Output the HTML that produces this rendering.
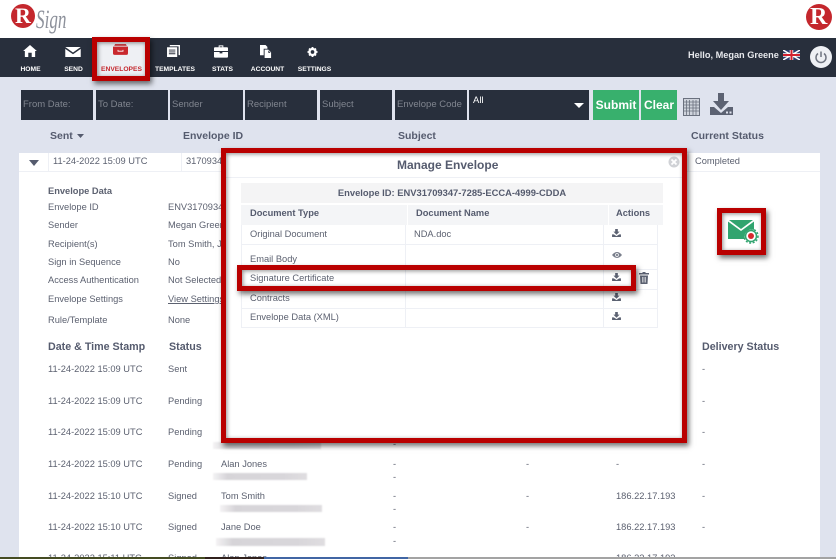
<!DOCTYPE html>
<html><head><meta charset="utf-8"><style>
html,body{margin:0;padding:0;width:836px;height:559px;overflow:hidden;background:#dfe3ee;}
body{position:relative;font-family:"Liberation Sans",sans-serif;font-size:9.3px;color:#5c6170;}
div,span,svg{position:absolute;white-space:nowrap;}
.t{line-height:12px;}
.nl{color:#fff;font-size:6.7px;font-weight:bold;top:65px;line-height:9px;transform:translateX(-50%);}
.f{top:90px;height:30px;background:#282f3c;color:#80858f;font-size:9.5px;line-height:30px;padding-left:2px;box-sizing:border-box;}
.h{font-weight:bold;font-size:10.5px;color:#555b6e;line-height:14px;}
.l{background:#eef0f5;}
.r{border:5px solid #b90000;box-sizing:border-box;box-shadow:2px 3px 5px rgba(0,0,0,.55),inset 1px 1px 4px rgba(0,0,0,.45);}
.b{height:7px;background:linear-gradient(90deg,#f4f3f4,#d6d4d8 15%,#d8d6da 75%,#dfdde0);filter:blur(.7px);}
.mh{font:bold 9.3px/13px "Liberation Sans",sans-serif;color:#555b6e;}
</style></head><body>
<!-- top header -->
<div style="left:0;top:0;width:836px;height:38px;background:#fff"></div>
<svg style="left:11px;top:4px" width="24" height="24"><circle cx="12" cy="12" r="12" fill="#c4272d"/></svg>
<span style="left:15px;top:4px;font:bold 22px/24px 'Liberation Serif',serif;color:#fff">R</span>
<span style="left:36px;top:7px;font:italic 26px/26px 'Liberation Serif',serif;color:#8d919b;transform:scaleX(.66);transform-origin:left top">Sign</span>
<svg style="left:805px;top:3px" width="28" height="28"><circle cx="14" cy="14" r="13" fill="#c4272d"/></svg>
<span style="left:810px;top:5px;font:bold 24px/24px 'Liberation Serif',serif;color:#fff">R</span>
<!-- nav -->
<div style="left:0;top:38px;width:836px;height:39px;background:#282f3c"></div>
<svg style="left:23px;top:45px" width="14" height="12" viewBox="0 0 16 14"><path fill="#fff" d="M8 0 16 7H14V14H10V9H6V14H2V7H0Z"/></svg>
<svg style="left:65px;top:47px" width="16" height="10" viewBox="0 0 17 11"><path fill="#fff" d="M0 0H17L8.500 6ZM0 2 8.500 8 17 2V11H0Z"/></svg>
<svg style="left:167px;top:45px" width="13" height="12" viewBox="0 0 14 13"><path fill="#fff" d="M3 0H14V11H12.500V1.500H3ZM0 2.500H11V13H0Z"/><path stroke="#282f3c" d="M2 5.500H9M2 7.500H9M2 9.500H9"/></svg>
<svg style="left:214px;top:45px" width="14" height="13" viewBox="0 0 15 13"><path fill="#fff" d="M5 0H10V2H14Q15 2 15 3V6H0V3Q0 2 1 2H5ZM6 1V2H9V1ZM0 7H6V8.500H9V7H15V12Q15 13 14 13H1Q0 13 0 12Z"/></svg>
<svg style="left:260px;top:45px" width="12" height="13" viewBox="0 0 13 14"><path fill="#fff" d="M0 0H6L8 2V4H4V11H0ZM5 5H9L12 8V14H5ZM9 5.800V8.500H11.500Z"/></svg>
<svg style="left:307px;top:47px" width="11" height="10" viewBox="0 0 11 11"><circle cx="5.500" cy="5.500" r="3.300" fill="none" stroke="#fff" stroke-width="2.600"/><path stroke="#fff" stroke-width="2" d="M5.500 0V2M5.500 9V11M0 5.500H2M9 5.500H11M1.700 1.700 3 3M8 8 9.300 9.300M9.300 1.700 8 3M3 8 1.700 9.300"/></svg>
<span class="nl" style="left:30.500px">HOME</span>
<span class="nl" style="left:73.500px">SEND</span>
<span class="nl" style="left:175px">TEMPLATES</span>
<span class="nl" style="left:222.500px">STATS</span>
<span class="nl" style="left:267.500px">ACCOUNT</span>
<span class="nl" style="left:314.500px">SETTINGS</span>
<!-- envelopes highlight -->
<div style="left:92px;top:37px;width:58px;height:44px;background:#eef0f4"></div>
<svg style="left:113px;top:43px" width="15" height="13" viewBox="0 0 18 13"><path fill="#c9282d" d="M2.500 0H15.500L16.500 2H1.500ZM0 3H18V11Q18 13 16 13H2Q0 13 0 11Z"/><path stroke="#fff" fill="none" d="M6 7V8.500H12V7"/></svg>
<span class="nl" style="left:121.500px;color:#c4272d">ENVELOPES</span>
<div class="r" style="left:92px;top:37px;width:58px;height:44px"></div>
<span class="t" style="left:688px;top:49px;color:#e6e8ec;font-size:9.2px;font-weight:bold">Hello, Megan Greene</span>
<svg style="left:783px;top:50px" width="17" height="10" viewBox="0 0 17 10"><rect width="17" height="10" fill="#2b3a6b"/><path stroke="#fff" stroke-width="1.500" d="M0 0 17 10M17 0 0 10"/><path stroke="#fff" stroke-width="3.500" d="M8.500 0V10M0 5H17"/><path stroke="#d2202f" stroke-width="2" d="M8.500 0V10M0 5H17"/></svg>
<svg style="left:810px;top:46px" width="22" height="22" viewBox="0 0 22 22"><circle cx="11" cy="11" r="11" fill="#eef0f4"/><path fill="none" stroke="#6f7480" stroke-width="1.500" d="M8 7.500A5 5 0 1 0 14 7.500M11 5.500V11"/></svg>
<!-- filters -->
<div class="f" style="left:21px;width:72px">From Date:</div>
<div class="f" style="left:96px;width:72px">To Date:</div>
<div class="f" style="left:170px;width:73px">Sender</div>
<div class="f" style="left:245px;width:72px">Recipient</div>
<div class="f" style="left:320px;width:72px">Subject</div>
<div class="f" style="left:395px;width:72px">Envelope Code</div>
<div class="f" style="left:469px;width:120px;color:#fff;line-height:12px;padding:5px 0 0 4px;font-size:9.500px">All</div>
<svg style="left:574px;top:103px" width="10" height="5"><path fill="#fff" d="M0 0H10L5 5Z"/></svg>
<div style="left:593px;top:90px;width:46px;height:30px;background:#38b06d;color:#fff;font:bold 12px/30px 'Liberation Sans',sans-serif;text-align:center">Submit</div>
<div style="left:641px;top:90px;width:36px;height:30px;background:#38b06d;color:#fff;font:bold 12px/30px 'Liberation Sans',sans-serif;text-align:center">Clear</div>
<svg style="left:683px;top:98px" width="17" height="18" viewBox="0 0 17 18"><rect x=".5" y=".5" width="16" height="17" fill="#cfd3dc" stroke="#6a707e"/><path stroke="#6a707e" stroke-width=".8" d="M0 4H17M0 7H17M0 10H17M0 13H17M3.500 2V18M6.500 2V18M10 2V18M13 2V18"/></svg>
<svg style="left:710px;top:93px" width="24" height="23" viewBox="0 0 24 23"><path fill="#5c6272" d="M8 0H14V8H19L11 17 3 8H8Z"/><path fill="#5c6272" d="M0 14H4L11 20 18 14H23V22H0Z"/><path fill="#dfe3ee" d="M16 18.500H18V20.500H16ZM19.500 18.500H21.500V20.500H19.500Z"/></svg>
<!-- table head -->
<span class="h" style="left:50px;top:129px">Sent</span>
<svg style="left:77px;top:134px" width="7" height="4"><path fill="#555b6e" d="M0 0H7L3.500 4Z"/></svg>
<span class="h" style="left:183px;top:129px">Envelope ID</span>
<span class="h" style="left:398px;top:129px">Subject</span>
<span class="h" style="left:691px;top:129px">Current Status</span>
<!-- content panel -->
<div style="left:19px;top:153px;width:801px;height:404px;background:#fff"></div>
<div class="l" style="left:19px;top:171px;width:801px;height:1px"></div>
<div class="l" style="left:48px;top:153px;width:1px;height:18px"></div>
<div class="l" style="left:181px;top:153px;width:1px;height:18px"></div>
<div class="l" style="left:688px;top:153px;width:1px;height:18px"></div>
<svg style="left:29px;top:160px" width="10" height="6"><path fill="#555b6e" d="M0 0H10L5 6Z"/></svg>
<span class="t" style="left:53px;top:155px">11-24-2022 15:09 UTC</span>
<span class="t" style="left:186px;top:155px">31709347</span>
<span class="t" style="left:695px;top:155px">Completed</span>
<!-- envelope data -->
<span class="t" style="left:48px;top:185px;font-weight:bold">Envelope Data</span>
<span class="t" style="left:48px;top:201px">Envelope ID</span><span class="t" style="left:168px;top:201px">ENV31709347</span>
<span class="t" style="left:48px;top:219px">Sender</span><span class="t" style="left:168px;top:219px">Megan Greene</span>
<span class="t" style="left:48px;top:238px">Recipient(s)</span><span class="t" style="left:168px;top:238px">Tom Smith, Jane</span>
<span class="t" style="left:48px;top:256px">Sign in Sequence</span><span class="t" style="left:168px;top:256px">No</span>
<span class="t" style="left:48px;top:274px">Access Authentication</span><span class="t" style="left:168px;top:274px">Not Selected</span>
<span class="t" style="left:48px;top:293px">Envelope Settings</span><span class="t" style="left:168px;top:293px;text-decoration:underline">View Settings</span>
<span class="t" style="left:48px;top:314px">Rule/Template</span><span class="t" style="left:168px;top:314px">None</span>
<!-- history -->
<span class="h" style="left:48px;top:340px;font-size:10.700px">Date &amp; Time Stamp</span>
<span class="h" style="left:169px;top:340px;font-size:10.700px">Status</span>
<span class="h" style="left:702px;top:340px;font-size:10.700px">Delivery Status</span>
<span class="t" style="left:48px;top:363px">11-24-2022 15:09 UTC</span><span class="t" style="left:168px;top:363px">Sent</span>
<span class="t" style="left:48px;top:395px">11-24-2022 15:09 UTC</span><span class="t" style="left:168px;top:395px">Pending</span>
<span class="t" style="left:48px;top:426px">11-24-2022 15:09 UTC</span><span class="t" style="left:168px;top:426px">Pending</span>
<span class="t" style="left:48px;top:458px">11-24-2022 15:09 UTC</span><span class="t" style="left:168px;top:458px">Pending</span><span class="t" style="left:221px;top:458px">Alan Jones</span>
<span class="t" style="left:48px;top:490px">11-24-2022 15:10 UTC</span><span class="t" style="left:168px;top:490px">Signed</span><span class="t" style="left:221px;top:490px">Tom Smith</span>
<span class="t" style="left:48px;top:521px">11-24-2022 15:10 UTC</span><span class="t" style="left:168px;top:521px">Signed</span><span class="t" style="left:221px;top:521px">Jane Doe</span>
<span class="t" style="left:48px;top:552px;height:5px;overflow:hidden">11-24-2022 15:11 UTC</span><span class="t" style="left:168px;top:552px;height:5px;overflow:hidden">Signed</span><span class="t" style="left:221px;top:552px;height:5px;overflow:hidden">Alan Jones</span>
<div class="b" style="left:213px;top:442px;width:108px"></div>
<div class="b" style="left:213px;top:473px;width:94px"></div>
<div class="b" style="left:220px;top:505px;width:102px"></div>
<div class="b" style="left:216px;top:538px;width:109px;height:8px"></div>
<span class="t" style="left:702px;top:363px">-</span><span class="t" style="left:702px;top:395px">-</span><span class="t" style="left:702px;top:426px">-</span><span class="t" style="left:702px;top:458px">-</span><span class="t" style="left:702px;top:490px">-</span><span class="t" style="left:702px;top:521px">-</span>
<span class="t" style="left:393px;top:438px">-</span><span class="t" style="left:393px;top:458px">-</span><span class="t" style="left:393px;top:471px">-</span><span class="t" style="left:393px;top:490px">-</span><span class="t" style="left:393px;top:503px">-</span><span class="t" style="left:393px;top:521px">-</span><span class="t" style="left:393px;top:535px">-</span>
<span class="t" style="left:526px;top:458px">-</span><span class="t" style="left:526px;top:490px">-</span><span class="t" style="left:526px;top:521px">-</span>
<span class="t" style="left:616px;top:458px">-</span>
<span class="t" style="left:616px;top:490px">186.22.17.193</span><span class="t" style="left:616px;top:521px">186.22.17.193</span>
<span class="t" style="left:616px;top:552px;height:5px;overflow:hidden">186.22.17.193</span>
<!-- bottom strip -->
<div style="left:0;top:557px;width:836px;height:2px;background:#a3a3a3"></div>
<div style="left:0;top:557px;width:205px;height:2px;background:#454c22"></div>
<div style="left:205px;top:557px;width:59px;height:2px;background:#30201c"></div>
<div style="left:264px;top:557px;width:144px;height:2px;background:#4166a4"></div>
<!-- modal -->
<div style="left:226px;top:153px;width:456px;height:285px;background:#fff"></div>
<div class="l" style="left:226px;top:177px;width:456px;height:1px"></div>
<span style="left:397px;top:158px;font:bold 12px/14px 'Liberation Sans',sans-serif;color:#555b6e">Manage Envelope</span>
<svg style="left:668px;top:156px" width="12" height="12" viewBox="0 0 12 12"><circle cx="6" cy="6" r="5.500" fill="#d0d2d6"/><path stroke="#fff" stroke-width="1.800" d="M3.500 3.500 8.500 8.500M8.500 3.500 3.500 8.500"/></svg>
<div style="left:241px;top:183px;width:422px;height:20px;background:#f4f4f5"></div>
<span style="left:241px;width:422px;text-align:center;top:186px;font:bold 9.400px/13px 'Liberation Sans',sans-serif;color:#555b6e">Envelope ID: ENV31709347-7285-ECCA-4999-CDDA</span>
<div style="left:241px;top:205px;width:422px;height:20px;background:#f4f5f7"></div>
<div style="left:407px;top:205px;width:1px;height:20px;background:#fff"></div>
<div style="left:608px;top:205px;width:1px;height:20px;background:#fff"></div>
<span class="mh" style="left:250px;top:207px">Document Type</span>
<span class="mh" style="left:416px;top:207px">Document Name</span>
<span class="mh" style="left:616px;top:207px">Actions</span>
<!-- modal grid -->
<div class="l" style="left:241px;top:244px;width:417px;height:1px"></div>
<div class="l" style="left:241px;top:269px;width:417px;height:1px"></div>
<div class="l" style="left:241px;top:289px;width:417px;height:1px"></div>
<div class="l" style="left:241px;top:308px;width:417px;height:1px"></div>
<div class="l" style="left:241px;top:327px;width:417px;height:1px"></div>
<div class="l" style="left:241px;top:225px;width:1px;height:103px"></div>
<div class="l" style="left:405px;top:225px;width:1px;height:103px"></div>
<div class="l" style="left:603px;top:225px;width:1px;height:103px"></div>
<div class="l" style="left:657px;top:225px;width:1px;height:103px"></div>
<span class="t" style="left:250px;top:228px">Original Document</span><span class="t" style="left:414px;top:228px">NDA.doc</span>
<span class="t" style="left:250px;top:253px">Email Body</span>
<span class="t" style="left:250px;top:272px">Signature Certificate</span>
<span class="t" style="left:250px;top:292px">Contracts</span>
<span class="t" style="left:250px;top:311px">Envelope Data (XML)</span>
<svg style="left:612px;top:229px" width="9" height="8" viewBox="0 0 10 9"><path fill="#5c6272" d="M3.500 0H6.500V3H8.500L5 6.500 1.500 3H3.500ZM0 6H2L5 8 8 6H10V9H0Z"/></svg>
<svg style="left:612px;top:251px" width="10" height="8" viewBox="0 0 11 8"><path fill="#7a7f8c" d="M0 4Q5.500-2.500 11 4 5.500 10.500 0 4Z"/><circle cx="5.500" cy="4" r="2" fill="#fff"/><circle cx="5.500" cy="4" r="1.200" fill="#7a7f8c"/></svg>
<svg style="left:612px;top:273px" width="9" height="8" viewBox="0 0 10 9"><path fill="#5c6272" d="M3.500 0H6.500V3H8.500L5 6.500 1.500 3H3.500ZM0 6H2L5 8 8 6H10V9H0Z"/></svg>
<svg style="left:612px;top:293px" width="9" height="8" viewBox="0 0 10 9"><path fill="#5c6272" d="M3.500 0H6.500V3H8.500L5 6.500 1.500 3H3.500ZM0 6H2L5 8 8 6H10V9H0Z"/></svg>
<svg style="left:612px;top:312px" width="9" height="8" viewBox="0 0 10 9"><path fill="#5c6272" d="M3.500 0H6.500V3H8.500L5 6.500 1.500 3H3.500ZM0 6H2L5 8 8 6H10V9H0Z"/></svg>
<svg style="left:639px;top:272px" width="10" height="12" viewBox="0 0 10 12"><path fill="#5c6272" d="M3.500 0H6.500V1H10V2.500H0V1H3.500ZM1 3.500H9L8.500 12H1.500Z"/><path stroke="#fff" stroke-width=".6" d="M3.500 5V10.500M5 5V10.500M6.500 5V10.500"/></svg>
<div class="r" style="left:221px;top:148px;width:466px;height:295px;background:none"></div>
<div class="r" style="left:237px;top:265px;width:399px;height:26px"></div>
<!-- envelope gear -->
<div class="r" style="left:717px;top:208px;width:49px;height:47px"></div>
<svg style="left:728px;top:220px" width="32" height="26" viewBox="0 0 32 26"><path fill="#31a46f" d="M1 0H25L13 9ZM0 1.500 13 11 26 1.500V10A7 7 0 0 0 17 19H0Z"/><circle cx="23" cy="16" r="5.500" fill="#fff" stroke="#31a46f" stroke-width="1.500"/><circle cx="23" cy="16" r="7" fill="none" stroke="#31a46f" stroke-width="1.500" stroke-dasharray="2 1.600"/><circle cx="23" cy="16" r="3" fill="#d8282e"/></svg>
</body></html>
